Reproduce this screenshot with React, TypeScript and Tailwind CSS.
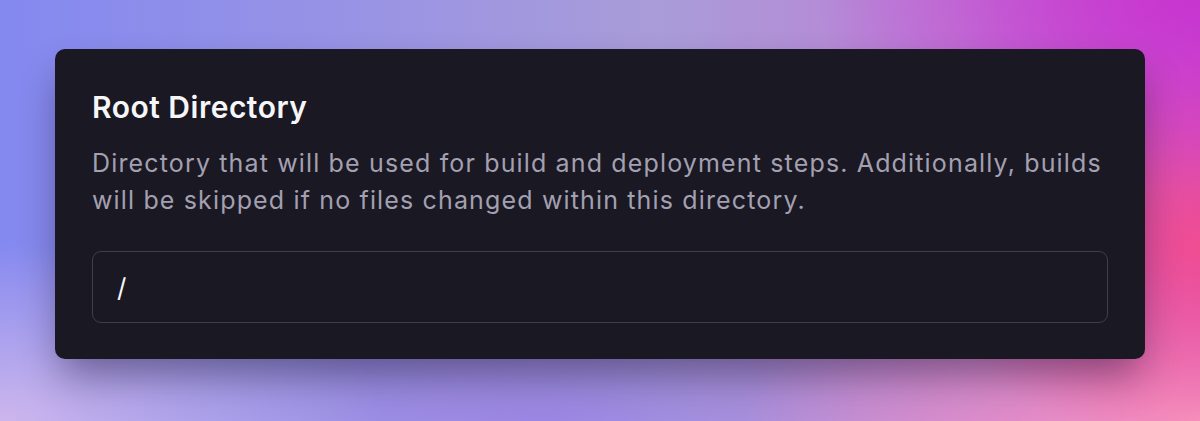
import React from "react";

export default function App() {
  return (
    <div
      className="relative h-[421px] w-[1200px] overflow-hidden px-[55px] pt-[49px] bg-[radial-gradient(ellipse_32%_45%_at_100%_0%,#c835d0_0%,rgba(200,53,208,0)_100%),radial-gradient(ellipse_22%_50%_at_100%_58%,#f04c92_0%,rgba(240,76,146,0)_100%),radial-gradient(ellipse_38%_50%_at_100%_100%,#f79bc2_0%,rgba(247,155,194,0)_100%),radial-gradient(ellipse_32%_42%_at_0%_100%,#cdb6ec_0%,rgba(205,182,236,0)_100%),radial-gradient(ellipse_28%_30%_at_45%_100%,#9c86e4_0%,rgba(156,134,228,0)_100%),linear-gradient(90deg,#8489f0_0%,#9c95e2_35%,#a99cd8_55%,#bd80d6_80%,#c94fcf_100%)]"
      style={{ fontFamily: "Inter, 'Noto Sans', sans-serif" }}
    >
      <div className="flex flex-col rounded-[10px] bg-[#191823] px-[37px] pt-10 pb-9 shadow-[0_22px_40px_-6px_rgba(20,10,40,0.45)]">
        <h2 className="text-[30px] leading-[36px] font-semibold text-[#f6f6f8] tracking-[0.5px]">
          Root Directory
        </h2>
        <p className="mt-5 text-[25px] leading-[37px] text-[#a3a0b1] tracking-[1.15px]">
          Directory that will be used for build and deployment steps. Additionally, builds will be skipped if no files changed within this directory.
        </p>
        <div className="mt-8 flex h-[72px] items-center rounded-[9px] border border-[#3f3e4a] bg-[#191823] px-6 text-[26px] text-[#f6f6f8]">
          /
        </div>
      </div>
    </div>
  );
}
